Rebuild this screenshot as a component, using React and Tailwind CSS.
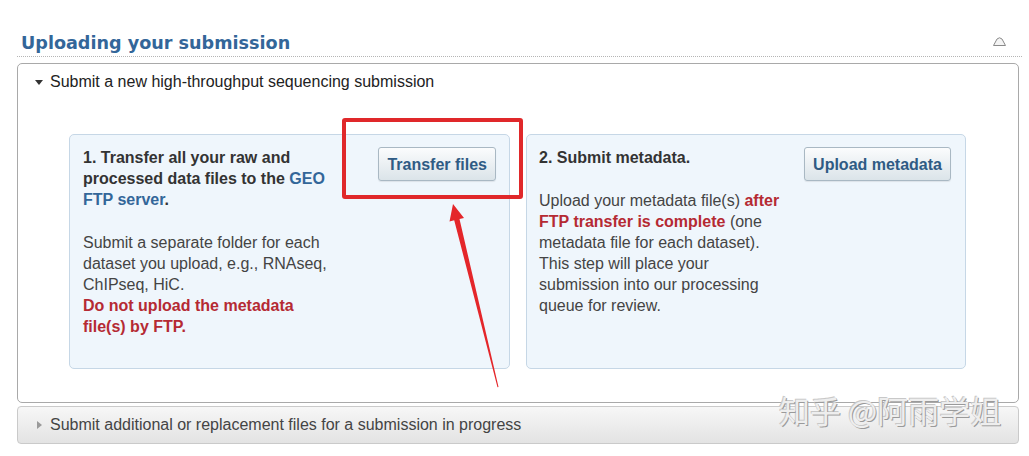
import React from 'react';

const Btn = ({ children }) => (
  <button className="h-[34px] shrink-0 px-[8px] rounded-[3px] border border-[#a9b8c3] bg-gradient-to-b from-[#fbfcfd] to-[#dbe4e9] text-[16px] font-bold text-[#2f5b84] shadow-[0_1px_1px_rgba(0,0,0,0.08)]">
    {children}
  </button>
);

const App = () => {
  return (
    <div className="relative w-[1029px] h-[456px] bg-white overflow-hidden font-['Liberation_Sans',Arial,sans-serif] text-[#333]">
      <div className="pl-[17px] pr-[10px] pt-[31px]">
        {/* section header */}
        <div className="flex items-end justify-between h-[26px] pl-[4px] pr-[15px] mr-[-3px] border-b border-dotted border-[#b5b5b5]">
          <h2 className="font-['DejaVu_Sans',sans-serif] text-[17.6px] leading-[20px] font-bold text-[#336699] pb-[3px]">
            Uploading your submission
          </h2>
          <svg width="15" height="11" viewBox="0 0 15 11" className="mb-[9px]">
            <path d="M1.5 9.5 L5 3 Q7.5 0.5 10 3 L13.5 9.5 Z" fill="#f4f4f4" stroke="#8a8a8a" strokeWidth="1" />
          </svg>
        </div>

        {/* expanded panel */}
        <div className="mt-[6px] w-[1002px] h-[340px] border border-[#a9a9a9] rounded-[5px] bg-white">
          <div className="flex items-center h-[20px] mt-[8px] pl-[17px] text-[16px] text-[#222]">
            <svg width="8" height="5" viewBox="0 0 8 5" className="mr-[7px]">
              <path d="M0 0 L8 0 L4 5 Z" fill="#333" />
            </svg>
            Submit a new high-throughput sequencing submission
          </div>

          <div className="flex gap-[16px] pl-[51px] mt-[42px]">
            <div className="flex justify-between w-[441px] h-[235px] pl-[13px] pr-[13px] pt-[12px] border border-[#c6d7e6] rounded-[5px] bg-[#eff6fc] text-[16px] leading-[21px]">
              <div className="w-[250px]">
                <p className="font-bold text-[#333]">
                  1. Transfer all your raw and processed data files to the{' '}
                  <span className="text-[#336699]">GEO FTP server</span>.
                </p>
                <p className="mt-[22px] text-[#444]">
                  Submit a separate folder for each dataset you upload, e.g., RNAseq, ChIPseq, HiC.
                </p>
                <p className="font-bold text-[#b52a33]">Do not upload the metadata file(s) by FTP.</p>
              </div>
              <Btn>Transfer files</Btn>
            </div>

            <div className="flex justify-between w-[440px] h-[235px] pl-[12px] pr-[14px] pt-[12px] border border-[#c6d7e6] rounded-[5px] bg-[#eff6fc] text-[16px] leading-[21px]">
              <div className="w-[250px]">
                <p className="font-bold text-[#333]">2. Submit metadata.</p>
                <p className="mt-[22px] text-[#444]">
                  Upload your metadata file(s){' '}
                  <span className="font-bold text-[#b52a33]">after FTP transfer is complete</span> (one metadata file for each dataset). This step will place your submission into our processing queue for review.
                </p>
              </div>
              <Btn>Upload metadata</Btn>
            </div>
          </div>
        </div>

        {/* collapsed panel */}
        <div className="mt-[3px] w-[1002px] h-[38px] flex items-center pl-[19px] border border-[#cacaca] rounded-[4px] bg-gradient-to-b from-[#f7f7f7] to-[#e3e3e3] text-[16px] text-[#444]">
          <svg width="5" height="8" viewBox="0 0 5 8" className="mr-[8px]">
            <path d="M0 0 L5 4 L0 8 Z" fill="#9a9a9a" />
          </svg>
          Submit additional or replacement files for a submission in progress
        </div>
      </div>

      {/* annotation overlay */}
      <div className="absolute left-[342px] top-[118px] w-[181px] h-[81px] border-[4px] border-[#e0282a] rounded-[3px]"></div>
      <svg className="absolute left-0 top-0 pointer-events-none" width="1029" height="456">
        <polygon
          points="453,204 464,218 459.5,219 498.5,387 497.5,387.2 454.2,220.2 449.5,221.5"
          fill="#e4262a"
        />
      </svg>

      {/* watermark */}
      <div className="absolute left-[779px] top-[391px] text-[31px] leading-[38px] text-[#eeeeee] font-['Noto_Sans_CJK_SC',sans-serif] [text-shadow:1px_1px_0_#9a9a9a,-1px_-1px_0_#c8c8c8]">
        知乎 @阿雨学姐
      </div>
    </div>
  );
};

export default App;
